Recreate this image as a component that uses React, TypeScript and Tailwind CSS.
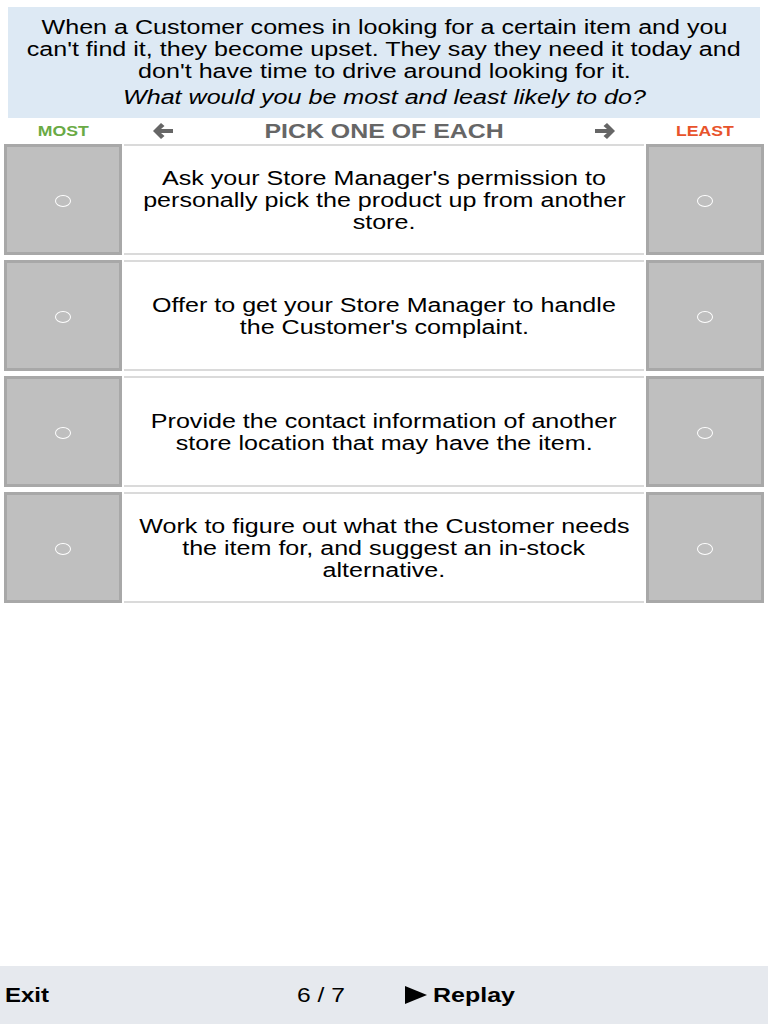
import React from 'react'

const options = [
  ["Ask your Store Manager's permission to", 'personally pick the product up from another', 'store.'],
  ['Offer to get your Store Manager to handle', "the Customer's complaint."],
  ['Provide the contact information of another', 'store location that may have the item.'],
  ['Work to figure out what the Customer needs', 'the item for, and suggest an in-stock', 'alternative.'],
]

const question = [
  'When a Customer comes in looking for a certain item and you',
  "can't find it, they become upset. They say they need it today and",
  "don't have time to drive around looking for it.",
]

function Arrow({ flip }: { flip?: boolean }) {
  return (
    <svg width="22" height="18" viewBox="0 0 22 18" className={flip ? 'rotate-180' : ''}>
      <path d="M9 1 L1 9 L9 17 L12.5 14 L9 11 H21 V7 H9 L12.5 4 Z" fill="#666666" />
    </svg>
  )
}

function Choice() {
  return (
    <div className="w-[118px] shrink-0 bg-[#bfbfbf] border-[3px] border-[#a8a8a8] flex items-center justify-center pt-[3px]">
      <div className="w-[16px] h-[12px] rounded-[50%] border-[1.5px] border-white" />
    </div>
  )
}

export default function App() {
  return (
    <div className="w-[768px] h-[1024px] overflow-hidden bg-white flex flex-col font-['Liberation_Sans',Arial,sans-serif] text-black">
      {/* Question */}
      <div className="mx-[8px] mt-[7px] h-[111px] bg-[#dde9f4] pt-[9px] flex flex-col items-center text-center text-[20px] leading-[22px]">
        {question.map((l) => (
          <p key={l} className="w-fit whitespace-nowrap scale-x-[1.254]">{l}</p>
        ))}
        <p className="w-fit italic mt-[4px] whitespace-nowrap scale-x-[1.254]">What would you be most and least likely to do?</p>
      </div>

      {/* Labels */}
      <div className="h-[26px] flex items-center px-[4px]">
        <div className="w-[118px] flex justify-center">
          <span className="block scale-x-[1.26] text-[14px] font-bold text-[#6aaa45]">MOST</span>
        </div>
        <div className="flex-1 flex items-center justify-between px-[30px]">
          <Arrow />
          <span className="block scale-x-[1.245] text-[20px] font-bold text-[#666666]">PICK ONE OF EACH</span>
          <Arrow flip />
        </div>
        <div className="w-[118px] flex justify-center">
          <span className="block scale-x-[1.26] text-[14px] font-bold text-[#e8532b]">LEAST</span>
        </div>
      </div>

      {/* Options */}
      <div className="flex flex-col gap-[5px] px-[4px]">
        {options.map((o) => (
          <div key={o[0]} className="flex h-[111px] gap-[2px]">
            <Choice />
            <div className="flex-1 bg-white border-y-2 border-[#dadada] flex flex-col items-center justify-center text-center text-[20px] leading-[22px]">
              {o.map((l) => (
                <span key={l} className="block w-fit whitespace-nowrap scale-x-[1.254]">{l}</span>
              ))}
            </div>
            <Choice />
          </div>
        ))}
      </div>

      <div className="flex-1" />

      {/* Footer */}
      <div className="h-[58px] bg-[#e6e9ee] flex items-center text-[20px]">
        <div className="ml-[5px] w-[292px]">
          <span className="block w-fit origin-left scale-x-[1.2] font-bold">Exit</span>
        </div>
        <div className="w-[108px]">
          <span className="block w-fit origin-left scale-x-[1.23]">6 / 7</span>
        </div>
        <div className="flex items-center gap-[6px]">
          <svg width="22" height="18" viewBox="0 0 22 18">
            <path d="M0 0 L22 9 L0 18 Z" fill="#000" />
          </svg>
          <span className="block w-fit origin-left scale-x-[1.25] font-bold">Replay</span>
        </div>
      </div>
    </div>
  )
}
